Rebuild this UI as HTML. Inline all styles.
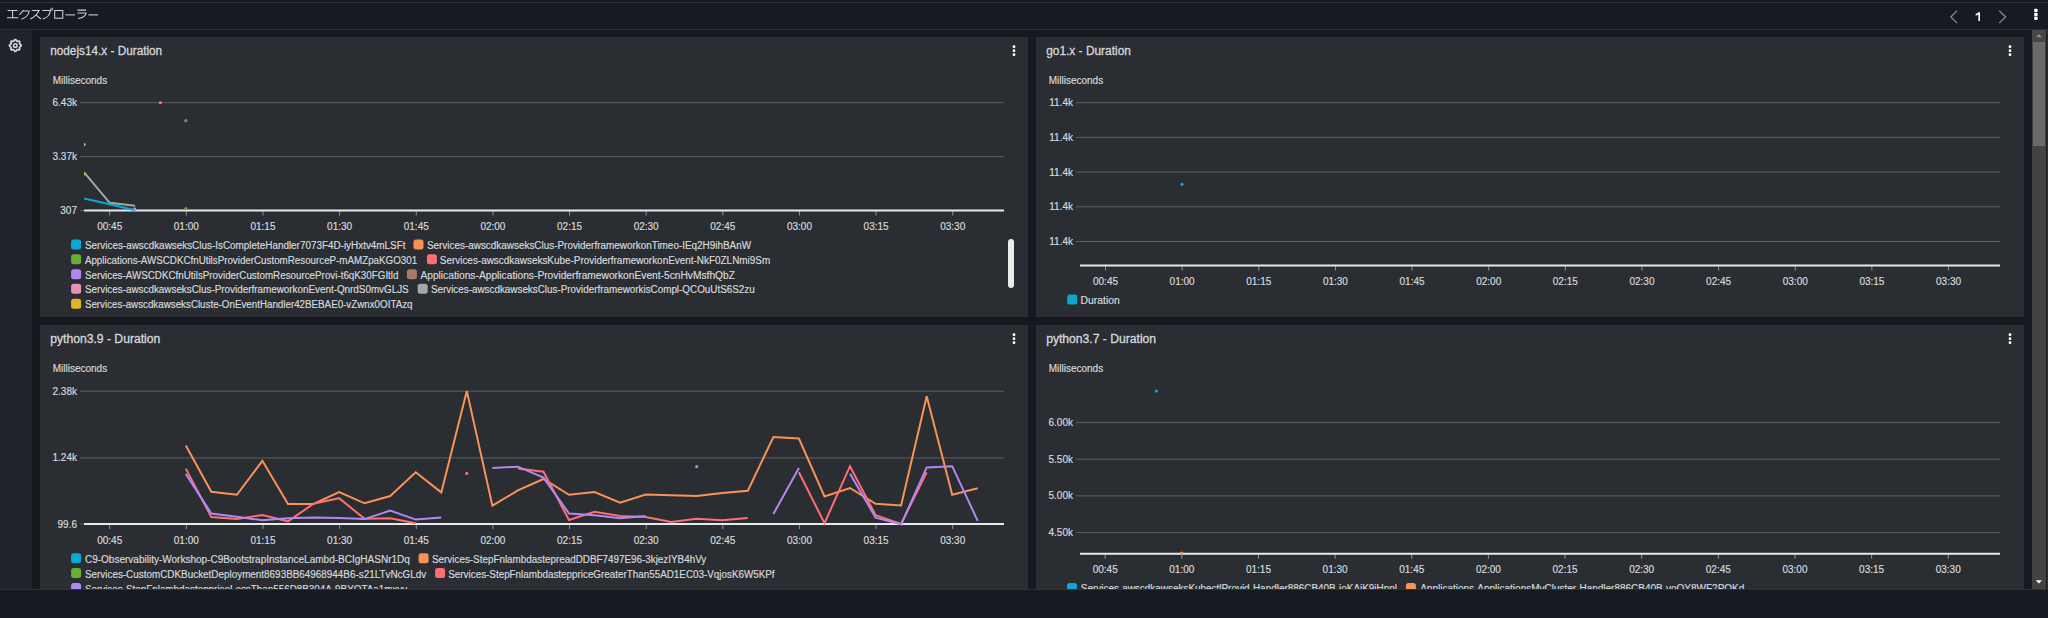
<!DOCTYPE html>
<html><head><meta charset="utf-8">
<style>
html,body{margin:0;padding:0;}
body{width:2048px;height:618px;overflow:hidden;background:#16191f;position:relative;font-family:"Liberation Sans", sans-serif;}
.abs{position:absolute;}
svg text{font-family:"Liberation Sans", sans-serif;stroke:#d5d9dd;stroke-width:0.18px;}
</style></head><body>

<div class="abs" style="left:0;top:0;width:2048px;height:2px;background:#161a21"></div>
<div class="abs" style="left:0;top:2px;width:2048px;height:1px;background:#2d3239"></div>
<div class="abs" style="left:0;top:3px;width:2048px;height:26px;background:#161a21"></div>
<div class="abs" style="left:0;top:29px;width:2048px;height:1px;background:#2d3239"></div>
<div class="abs" style="left:0;top:30px;width:32px;height:559px;background:#1f232a"></div>
<div class="abs" style="left:40px;top:37px;width:988px;height:280px;background:#2a2d32"></div>
<div class="abs" style="left:1036px;top:37px;width:988px;height:280px;background:#2a2d32"></div>
<div class="abs" style="left:40px;top:325px;width:988px;height:264px;background:#2a2d32"></div>
<div class="abs" style="left:1036px;top:325px;width:988px;height:264px;background:#2a2d32"></div>
<div class="abs" style="left:0;top:589px;width:2048px;height:1px;background:#2d3239"></div>
<div class="abs" style="left:0;top:590px;width:2048px;height:28px;background:#161a21"></div>
<div class="abs" style="left:2032px;top:30px;width:14px;height:559px;background:#434343"></div>
<div class="abs" style="left:2033px;top:42px;width:12px;height:104px;background:#6a6a6a"></div>
<div class="abs" style="left:2032px;top:30px;width:14px;height:12px;background:#474747"></div>
<div class="abs" style="left:2046px;top:30px;width:1px;height:559px;background:#1a1c22"></div>
<div class="abs" style="left:2047px;top:30px;width:1px;height:559px;background:#2b303a"></div>
<div class="abs" style="left:32px;top:30px;width:1px;height:559px;background:#131519"></div>
<svg class="abs" style="left:0;top:0" width="2048" height="618">
<defs><clipPath id="c1"><rect x="0" y="0" width="2048" height="589"/></clipPath></defs>
<g clip-path="url(#c1)">
<text x="50.2" y="55.0" font-size="12" fill="#d5d9dd" style="stroke-width:0.3px" textLength="112" lengthAdjust="spacingAndGlyphs">nodejs14.x - Duration</text>
<text x="52.7" y="84.2" font-size="10" fill="#d5d9dd">Milliseconds</text>
<line x1="80" y1="102.7" x2="1004" y2="102.7" stroke="#5c6064" stroke-width="1"/>
<text x="77" y="106.2" font-size="10" fill="#d5d9dd" text-anchor="end">6.43k</text>
<line x1="80" y1="156.7" x2="1004" y2="156.7" stroke="#5c6064" stroke-width="1"/>
<text x="77" y="160.2" font-size="10" fill="#d5d9dd" text-anchor="end">3.37k</text>
<line x1="80" y1="210.5" x2="1004" y2="210.5" stroke="#5c6064" stroke-width="1"/>
<text x="77" y="214.0" font-size="10" fill="#d5d9dd" text-anchor="end">307</text>
<line x1="109.7" y1="210.5" x2="109.7" y2="215.5" stroke="#8d9196" stroke-width="1"/>
<text x="109.7" y="230.1" font-size="10" fill="#d5d9dd" text-anchor="middle">00:45</text>
<line x1="186.34" y1="210.5" x2="186.34" y2="215.5" stroke="#8d9196" stroke-width="1"/>
<text x="186.34" y="230.1" font-size="10" fill="#d5d9dd" text-anchor="middle">01:00</text>
<line x1="262.98" y1="210.5" x2="262.98" y2="215.5" stroke="#8d9196" stroke-width="1"/>
<text x="262.98" y="230.1" font-size="10" fill="#d5d9dd" text-anchor="middle">01:15</text>
<line x1="339.62" y1="210.5" x2="339.62" y2="215.5" stroke="#8d9196" stroke-width="1"/>
<text x="339.62" y="230.1" font-size="10" fill="#d5d9dd" text-anchor="middle">01:30</text>
<line x1="416.26" y1="210.5" x2="416.26" y2="215.5" stroke="#8d9196" stroke-width="1"/>
<text x="416.26" y="230.1" font-size="10" fill="#d5d9dd" text-anchor="middle">01:45</text>
<line x1="492.9" y1="210.5" x2="492.9" y2="215.5" stroke="#8d9196" stroke-width="1"/>
<text x="492.9" y="230.1" font-size="10" fill="#d5d9dd" text-anchor="middle">02:00</text>
<line x1="569.5400000000001" y1="210.5" x2="569.5400000000001" y2="215.5" stroke="#8d9196" stroke-width="1"/>
<text x="569.5400000000001" y="230.1" font-size="10" fill="#d5d9dd" text-anchor="middle">02:15</text>
<line x1="646.1800000000001" y1="210.5" x2="646.1800000000001" y2="215.5" stroke="#8d9196" stroke-width="1"/>
<text x="646.1800000000001" y="230.1" font-size="10" fill="#d5d9dd" text-anchor="middle">02:30</text>
<line x1="722.82" y1="210.5" x2="722.82" y2="215.5" stroke="#8d9196" stroke-width="1"/>
<text x="722.82" y="230.1" font-size="10" fill="#d5d9dd" text-anchor="middle">02:45</text>
<line x1="799.46" y1="210.5" x2="799.46" y2="215.5" stroke="#8d9196" stroke-width="1"/>
<text x="799.46" y="230.1" font-size="10" fill="#d5d9dd" text-anchor="middle">03:00</text>
<line x1="876.1" y1="210.5" x2="876.1" y2="215.5" stroke="#8d9196" stroke-width="1"/>
<text x="876.1" y="230.1" font-size="10" fill="#d5d9dd" text-anchor="middle">03:15</text>
<line x1="952.74" y1="210.5" x2="952.74" y2="215.5" stroke="#8d9196" stroke-width="1"/>
<text x="952.74" y="230.1" font-size="10" fill="#d5d9dd" text-anchor="middle">03:30</text>
<line x1="84" y1="210.5" x2="1004" y2="210.5" stroke="#e6e8ea" stroke-width="2"/>
<clipPath id="cp40_37"><rect x="84" y="77" width="920" height="135.5"/></clipPath>
<g clip-path="url(#cp40_37)">
<polyline points="84.1,172.3 109.7,202.8 135.2,205.8" fill="none" stroke="#9fabaa" stroke-width="2" stroke-linejoin="miter"/>
<polyline points="84.1,198.6 109.7,204.2 135.2,210.3" fill="none" stroke="#0ba8d6" stroke-width="2" stroke-linejoin="miter"/>
<circle cx="160.4" cy="102.7" r="1.6" fill="#fe6e73"/>
<circle cx="185.8" cy="120.7" r="1.6" fill="#a97866"/>
<circle cx="84.1" cy="144.6" r="1.6" fill="#e891b4"/>
<circle cx="84.1" cy="173.9" r="1.6" fill="#dfb52c"/>
<circle cx="134.7" cy="208.9" r="1.6" fill="#b088f5"/>
<circle cx="185.8" cy="208.7" r="1.6" fill="#69ae34"/>
</g>
<rect x="71.1" y="239.4" width="10" height="10" rx="2.5" fill="#0ba8d6"/>
<text x="84.9" y="248.8" font-size="10" fill="#d5d9dd" textLength="320.6" lengthAdjust="spacingAndGlyphs">Services-awscdkawseksClus-IsCompleteHandler7073F4D-iyHxtv4mLSFt</text>
<rect x="413.5" y="239.4" width="10" height="10" rx="2.5" fill="#f89256"/>
<text x="426.9" y="248.8" font-size="10" fill="#d5d9dd" textLength="324.2" lengthAdjust="spacingAndGlyphs">Services-awscdkawseksClus-ProviderframeworkonTimeo-IEq2H9ihBAnW</text>
<rect x="71.1" y="254.2" width="10" height="10" rx="2.5" fill="#69ae34"/>
<text x="84.9" y="263.59999999999997" font-size="10" fill="#d5d9dd" textLength="332.2" lengthAdjust="spacingAndGlyphs">Applications-AWSCDKCfnUtilsProviderCustomResourceP-mAMZpaKGO301</text>
<rect x="426.9" y="254.2" width="10" height="10" rx="2.5" fill="#fe6e73"/>
<text x="439.8" y="263.59999999999997" font-size="10" fill="#d5d9dd" textLength="330.4" lengthAdjust="spacingAndGlyphs">Services-awscdkawseksKube-ProviderframeworkonEvent-NkF0ZLNmi9Sm</text>
<rect x="71.1" y="269.2" width="10" height="10" rx="2.5" fill="#b088f5"/>
<text x="84.9" y="278.59999999999997" font-size="10" fill="#d5d9dd" textLength="313.6" lengthAdjust="spacingAndGlyphs">Services-AWSCDKCfnUtilsProviderCustomResourceProvi-t6qK30FGItld</text>
<rect x="406.9" y="269.2" width="10" height="10" rx="2.5" fill="#a97866"/>
<text x="420.4" y="278.59999999999997" font-size="10" fill="#d5d9dd" textLength="314.6" lengthAdjust="spacingAndGlyphs">Applications-Applications-ProviderframeworkonEvent-5cnHvMsfhQbZ</text>
<rect x="71.1" y="283.8" width="10" height="10" rx="2.5" fill="#e891b4"/>
<text x="84.9" y="293.2" font-size="10" fill="#d5d9dd" textLength="323.8" lengthAdjust="spacingAndGlyphs">Services-awscdkawseksClus-ProviderframeworkonEvent-QnrdS0mvGLJS</text>
<rect x="417.7" y="283.8" width="10" height="10" rx="2.5" fill="#9fabaa"/>
<text x="430.9" y="293.2" font-size="10" fill="#d5d9dd" textLength="323.8" lengthAdjust="spacingAndGlyphs">Services-awscdkawseksClus-ProviderframeworkisCompl-QCOuUtS6S2zu</text>
<rect x="71.1" y="298.7" width="10" height="10" rx="2.5" fill="#dfb52c"/>
<text x="84.9" y="308.09999999999997" font-size="10" fill="#d5d9dd" textLength="327.6" lengthAdjust="spacingAndGlyphs">Services-awscdkawseksCluste-OnEventHandler42BEBAE0-vZwnx0OITAzq</text>
<rect x="1008" y="239" width="6" height="49" rx="3" fill="#ebebeb"/>
<rect x="1012.7" y="45.300000000000004" width="2.6" height="2.6" rx="0.9" fill="#ffffff"/>
<rect x="1012.7" y="49.300000000000004" width="2.6" height="2.6" rx="0.9" fill="#ffffff"/>
<rect x="1012.7" y="53.300000000000004" width="2.6" height="2.6" rx="0.9" fill="#ffffff"/>
<text x="1046.2" y="55.0" font-size="12" fill="#d5d9dd" style="stroke-width:0.3px" textLength="84.7" lengthAdjust="spacingAndGlyphs">go1.x - Duration</text>
<text x="1048.7" y="84.2" font-size="10" fill="#d5d9dd">Milliseconds</text>
<line x1="1076" y1="102.7" x2="2000" y2="102.7" stroke="#5c6064" stroke-width="1"/>
<text x="1073" y="106.2" font-size="10" fill="#d5d9dd" text-anchor="end">11.4k</text>
<line x1="1076" y1="137.4" x2="2000" y2="137.4" stroke="#5c6064" stroke-width="1"/>
<text x="1073" y="140.9" font-size="10" fill="#d5d9dd" text-anchor="end">11.4k</text>
<line x1="1076" y1="172.1" x2="2000" y2="172.1" stroke="#5c6064" stroke-width="1"/>
<text x="1073" y="175.6" font-size="10" fill="#d5d9dd" text-anchor="end">11.4k</text>
<line x1="1076" y1="206.8" x2="2000" y2="206.8" stroke="#5c6064" stroke-width="1"/>
<text x="1073" y="210.3" font-size="10" fill="#d5d9dd" text-anchor="end">11.4k</text>
<line x1="1076" y1="241.5" x2="2000" y2="241.5" stroke="#5c6064" stroke-width="1"/>
<text x="1073" y="245.0" font-size="10" fill="#d5d9dd" text-anchor="end">11.4k</text>
<line x1="1105.5" y1="265.6" x2="1105.5" y2="270.6" stroke="#8d9196" stroke-width="1"/>
<text x="1105.5" y="285.20000000000005" font-size="10" fill="#d5d9dd" text-anchor="middle">00:45</text>
<line x1="1182.14" y1="265.6" x2="1182.14" y2="270.6" stroke="#8d9196" stroke-width="1"/>
<text x="1182.14" y="285.20000000000005" font-size="10" fill="#d5d9dd" text-anchor="middle">01:00</text>
<line x1="1258.78" y1="265.6" x2="1258.78" y2="270.6" stroke="#8d9196" stroke-width="1"/>
<text x="1258.78" y="285.20000000000005" font-size="10" fill="#d5d9dd" text-anchor="middle">01:15</text>
<line x1="1335.42" y1="265.6" x2="1335.42" y2="270.6" stroke="#8d9196" stroke-width="1"/>
<text x="1335.42" y="285.20000000000005" font-size="10" fill="#d5d9dd" text-anchor="middle">01:30</text>
<line x1="1412.06" y1="265.6" x2="1412.06" y2="270.6" stroke="#8d9196" stroke-width="1"/>
<text x="1412.06" y="285.20000000000005" font-size="10" fill="#d5d9dd" text-anchor="middle">01:45</text>
<line x1="1488.7" y1="265.6" x2="1488.7" y2="270.6" stroke="#8d9196" stroke-width="1"/>
<text x="1488.7" y="285.20000000000005" font-size="10" fill="#d5d9dd" text-anchor="middle">02:00</text>
<line x1="1565.3400000000001" y1="265.6" x2="1565.3400000000001" y2="270.6" stroke="#8d9196" stroke-width="1"/>
<text x="1565.3400000000001" y="285.20000000000005" font-size="10" fill="#d5d9dd" text-anchor="middle">02:15</text>
<line x1="1641.98" y1="265.6" x2="1641.98" y2="270.6" stroke="#8d9196" stroke-width="1"/>
<text x="1641.98" y="285.20000000000005" font-size="10" fill="#d5d9dd" text-anchor="middle">02:30</text>
<line x1="1718.62" y1="265.6" x2="1718.62" y2="270.6" stroke="#8d9196" stroke-width="1"/>
<text x="1718.62" y="285.20000000000005" font-size="10" fill="#d5d9dd" text-anchor="middle">02:45</text>
<line x1="1795.26" y1="265.6" x2="1795.26" y2="270.6" stroke="#8d9196" stroke-width="1"/>
<text x="1795.26" y="285.20000000000005" font-size="10" fill="#d5d9dd" text-anchor="middle">03:00</text>
<line x1="1871.9" y1="265.6" x2="1871.9" y2="270.6" stroke="#8d9196" stroke-width="1"/>
<text x="1871.9" y="285.20000000000005" font-size="10" fill="#d5d9dd" text-anchor="middle">03:15</text>
<line x1="1948.54" y1="265.6" x2="1948.54" y2="270.6" stroke="#8d9196" stroke-width="1"/>
<text x="1948.54" y="285.20000000000005" font-size="10" fill="#d5d9dd" text-anchor="middle">03:30</text>
<line x1="1080" y1="265.6" x2="2000" y2="265.6" stroke="#e6e8ea" stroke-width="2"/>
<clipPath id="cp1036_37"><rect x="1080" y="77" width="920" height="190.60000000000002"/></clipPath>
<g clip-path="url(#cp1036_37)">
<circle cx="1182" cy="184.3" r="1.6" fill="#0ba8d6"/>
</g>
<rect x="1067.2" y="294.6" width="10" height="10" rx="2.5" fill="#0ba8d6"/>
<text x="1080.6" y="304.0" font-size="10" fill="#d5d9dd" textLength="39.2" lengthAdjust="spacingAndGlyphs">Duration</text>
<rect x="2008.7" y="45.300000000000004" width="2.6" height="2.6" rx="0.9" fill="#ffffff"/>
<rect x="2008.7" y="49.300000000000004" width="2.6" height="2.6" rx="0.9" fill="#ffffff"/>
<rect x="2008.7" y="53.300000000000004" width="2.6" height="2.6" rx="0.9" fill="#ffffff"/>
<text x="50.2" y="343.0" font-size="12" fill="#d5d9dd" style="stroke-width:0.3px" textLength="110.1" lengthAdjust="spacingAndGlyphs">python3.9 - Duration</text>
<text x="52.7" y="372.2" font-size="10" fill="#d5d9dd">Milliseconds</text>
<line x1="80" y1="391.2" x2="1004" y2="391.2" stroke="#5c6064" stroke-width="1"/>
<text x="77" y="394.7" font-size="10" fill="#d5d9dd" text-anchor="end">2.38k</text>
<line x1="80" y1="457.9" x2="1004" y2="457.9" stroke="#5c6064" stroke-width="1"/>
<text x="77" y="461.4" font-size="10" fill="#d5d9dd" text-anchor="end">1.24k</text>
<line x1="80" y1="524" x2="1004" y2="524" stroke="#5c6064" stroke-width="1"/>
<text x="77" y="527.5" font-size="10" fill="#d5d9dd" text-anchor="end">99.6</text>
<line x1="109.7" y1="524" x2="109.7" y2="529" stroke="#8d9196" stroke-width="1"/>
<text x="109.7" y="543.6" font-size="10" fill="#d5d9dd" text-anchor="middle">00:45</text>
<line x1="186.34" y1="524" x2="186.34" y2="529" stroke="#8d9196" stroke-width="1"/>
<text x="186.34" y="543.6" font-size="10" fill="#d5d9dd" text-anchor="middle">01:00</text>
<line x1="262.98" y1="524" x2="262.98" y2="529" stroke="#8d9196" stroke-width="1"/>
<text x="262.98" y="543.6" font-size="10" fill="#d5d9dd" text-anchor="middle">01:15</text>
<line x1="339.62" y1="524" x2="339.62" y2="529" stroke="#8d9196" stroke-width="1"/>
<text x="339.62" y="543.6" font-size="10" fill="#d5d9dd" text-anchor="middle">01:30</text>
<line x1="416.26" y1="524" x2="416.26" y2="529" stroke="#8d9196" stroke-width="1"/>
<text x="416.26" y="543.6" font-size="10" fill="#d5d9dd" text-anchor="middle">01:45</text>
<line x1="492.9" y1="524" x2="492.9" y2="529" stroke="#8d9196" stroke-width="1"/>
<text x="492.9" y="543.6" font-size="10" fill="#d5d9dd" text-anchor="middle">02:00</text>
<line x1="569.5400000000001" y1="524" x2="569.5400000000001" y2="529" stroke="#8d9196" stroke-width="1"/>
<text x="569.5400000000001" y="543.6" font-size="10" fill="#d5d9dd" text-anchor="middle">02:15</text>
<line x1="646.1800000000001" y1="524" x2="646.1800000000001" y2="529" stroke="#8d9196" stroke-width="1"/>
<text x="646.1800000000001" y="543.6" font-size="10" fill="#d5d9dd" text-anchor="middle">02:30</text>
<line x1="722.82" y1="524" x2="722.82" y2="529" stroke="#8d9196" stroke-width="1"/>
<text x="722.82" y="543.6" font-size="10" fill="#d5d9dd" text-anchor="middle">02:45</text>
<line x1="799.46" y1="524" x2="799.46" y2="529" stroke="#8d9196" stroke-width="1"/>
<text x="799.46" y="543.6" font-size="10" fill="#d5d9dd" text-anchor="middle">03:00</text>
<line x1="876.1" y1="524" x2="876.1" y2="529" stroke="#8d9196" stroke-width="1"/>
<text x="876.1" y="543.6" font-size="10" fill="#d5d9dd" text-anchor="middle">03:15</text>
<line x1="952.74" y1="524" x2="952.74" y2="529" stroke="#8d9196" stroke-width="1"/>
<text x="952.74" y="543.6" font-size="10" fill="#d5d9dd" text-anchor="middle">03:30</text>
<line x1="84" y1="524" x2="1004" y2="524" stroke="#e6e8ea" stroke-width="2"/>
<clipPath id="cp40_325"><rect x="84" y="365" width="920" height="161"/></clipPath>
<g clip-path="url(#cp40_325)">
<polyline points="185.8,445.5 211.3,491.7 236.9,494.8 262.4,460.8 288.0,504.0 313.5,504.0 339.1,492.1 364.6,503.3 390.2,496.0 415.7,472.2 441.3,492.4 466.8,390.9 492.4,505.7 517.9,490.4 543.5,479.0 569.0,494.8 594.5,492.1 620.1,502.6 645.6,494.6 671.2,495.3 696.7,496.0 722.3,493.1 747.8,490.7 773.4,437.0 798.9,438.5 824.5,496.5 850.0,488.0 875.6,503.8 901.1,505.5 926.7,396.3 952.2,494.8 977.7,488.3" fill="none" stroke="#f89256" stroke-width="2" stroke-linejoin="miter"/>
<polyline points="185.8,468.6 211.3,517.1 236.9,519.1 262.4,515.0 288.0,521.3 313.5,503.8 339.1,498.2 364.6,518.8 390.2,518.3 415.7,523.2" fill="none" stroke="#fe6e73" stroke-width="2" stroke-linejoin="miter"/>
<polyline points="517.9,468.6 543.5,471.7 569.0,520.0 594.5,511.8 620.1,515.9 645.6,517.1 671.2,522.0 696.7,518.8 722.3,520.3 747.8,517.9" fill="none" stroke="#fe6e73" stroke-width="2" stroke-linejoin="miter"/>
<polyline points="798.9,472.2 824.5,523.2 850.0,466.2 875.6,515.2 901.1,523.9 926.7,472.2" fill="none" stroke="#fe6e73" stroke-width="2" stroke-linejoin="miter"/>
<polyline points="185.8,473.9 211.3,513.5 236.9,516.7 262.4,520.3 288.0,518.3 313.5,517.4 339.1,518.1 364.6,519.1 390.2,510.6 415.7,519.6 441.3,517.4" fill="none" stroke="#b088f5" stroke-width="2" stroke-linejoin="miter"/>
<polyline points="492.4,467.9 517.9,466.7 543.5,477.6 569.0,513.5 594.5,515.2 620.1,518.3 645.6,515.9" fill="none" stroke="#b088f5" stroke-width="2" stroke-linejoin="miter"/>
<polyline points="773.4,514.0 798.9,467.9" fill="none" stroke="#b088f5" stroke-width="2" stroke-linejoin="miter"/>
<polyline points="850.0,473.7 875.6,517.6 901.1,524.4 926.7,467.4 952.2,466.2 977.7,520.8" fill="none" stroke="#b088f5" stroke-width="2" stroke-linejoin="miter"/>
<circle cx="466.81333333333333" cy="473.4" r="1.6" fill="#fe6e73"/>
<circle cx="696.7333333333333" cy="466.7" r="1.6" fill="#b088f5"/>
</g>
<rect x="71.1" y="553.2" width="10" height="10" rx="2.5" fill="#0ba8d6"/>
<text x="84.9" y="562.6" font-size="10" fill="#d5d9dd" textLength="325" lengthAdjust="spacingAndGlyphs">C9-Observability-Workshop-C9BootstrapInstanceLambd-BCIgHASNr1Dq</text>
<rect x="418.6" y="553.2" width="10" height="10" rx="2.5" fill="#f89256"/>
<text x="432" y="562.6" font-size="10" fill="#d5d9dd" textLength="274.3" lengthAdjust="spacingAndGlyphs">Services-StepFnlambdastepreadDDBF7497E96-3kjezIYB4hVy</text>
<rect x="71.1" y="568.1" width="10" height="10" rx="2.5" fill="#69ae34"/>
<text x="84.9" y="577.5" font-size="10" fill="#d5d9dd" textLength="341.3" lengthAdjust="spacingAndGlyphs">Services-CustomCDKBucketDeployment8693BB64968944B6-s21LTvNcGLdv</text>
<rect x="435.1" y="568.1" width="10" height="10" rx="2.5" fill="#fe6e73"/>
<text x="448.3" y="577.5" font-size="10" fill="#d5d9dd" textLength="326.3" lengthAdjust="spacingAndGlyphs">Services-StepFnlambdasteppriceGreaterThan55AD1EC03-VqjosK6W5KPf</text>
<rect x="71.1" y="583.1" width="10" height="10" rx="2.5" fill="#b088f5"/>
<text x="84.9" y="592.5" font-size="10" fill="#d5d9dd" textLength="322.3" lengthAdjust="spacingAndGlyphs">Services-StepFnlambdasteppriceLessThan556D8B304A-9BYOTAa1mxyy</text>
<rect x="1012.7" y="333.3" width="2.6" height="2.6" rx="0.9" fill="#ffffff"/>
<rect x="1012.7" y="337.3" width="2.6" height="2.6" rx="0.9" fill="#ffffff"/>
<rect x="1012.7" y="341.3" width="2.6" height="2.6" rx="0.9" fill="#ffffff"/>
<text x="1046.2" y="343.0" font-size="12" fill="#d5d9dd" style="stroke-width:0.3px" textLength="109.9" lengthAdjust="spacingAndGlyphs">python3.7 - Duration</text>
<text x="1048.7" y="372.2" font-size="10" fill="#d5d9dd">Milliseconds</text>
<line x1="1076" y1="422.6" x2="2000" y2="422.6" stroke="#5c6064" stroke-width="1"/>
<text x="1073" y="426.1" font-size="10" fill="#d5d9dd" text-anchor="end">6.00k</text>
<line x1="1076" y1="459.2" x2="2000" y2="459.2" stroke="#5c6064" stroke-width="1"/>
<text x="1073" y="462.7" font-size="10" fill="#d5d9dd" text-anchor="end">5.50k</text>
<line x1="1076" y1="495.9" x2="2000" y2="495.9" stroke="#5c6064" stroke-width="1"/>
<text x="1073" y="499.4" font-size="10" fill="#d5d9dd" text-anchor="end">5.00k</text>
<line x1="1076" y1="532.6" x2="2000" y2="532.6" stroke="#5c6064" stroke-width="1"/>
<text x="1073" y="536.1" font-size="10" fill="#d5d9dd" text-anchor="end">4.50k</text>
<line x1="1105.2" y1="553.8" x2="1105.2" y2="558.8" stroke="#8d9196" stroke-width="1"/>
<text x="1105.2" y="573.4" font-size="10" fill="#d5d9dd" text-anchor="middle">00:45</text>
<line x1="1181.8400000000001" y1="553.8" x2="1181.8400000000001" y2="558.8" stroke="#8d9196" stroke-width="1"/>
<text x="1181.8400000000001" y="573.4" font-size="10" fill="#d5d9dd" text-anchor="middle">01:00</text>
<line x1="1258.48" y1="553.8" x2="1258.48" y2="558.8" stroke="#8d9196" stroke-width="1"/>
<text x="1258.48" y="573.4" font-size="10" fill="#d5d9dd" text-anchor="middle">01:15</text>
<line x1="1335.1200000000001" y1="553.8" x2="1335.1200000000001" y2="558.8" stroke="#8d9196" stroke-width="1"/>
<text x="1335.1200000000001" y="573.4" font-size="10" fill="#d5d9dd" text-anchor="middle">01:30</text>
<line x1="1411.76" y1="553.8" x2="1411.76" y2="558.8" stroke="#8d9196" stroke-width="1"/>
<text x="1411.76" y="573.4" font-size="10" fill="#d5d9dd" text-anchor="middle">01:45</text>
<line x1="1488.4" y1="553.8" x2="1488.4" y2="558.8" stroke="#8d9196" stroke-width="1"/>
<text x="1488.4" y="573.4" font-size="10" fill="#d5d9dd" text-anchor="middle">02:00</text>
<line x1="1565.04" y1="553.8" x2="1565.04" y2="558.8" stroke="#8d9196" stroke-width="1"/>
<text x="1565.04" y="573.4" font-size="10" fill="#d5d9dd" text-anchor="middle">02:15</text>
<line x1="1641.68" y1="553.8" x2="1641.68" y2="558.8" stroke="#8d9196" stroke-width="1"/>
<text x="1641.68" y="573.4" font-size="10" fill="#d5d9dd" text-anchor="middle">02:30</text>
<line x1="1718.3200000000002" y1="553.8" x2="1718.3200000000002" y2="558.8" stroke="#8d9196" stroke-width="1"/>
<text x="1718.3200000000002" y="573.4" font-size="10" fill="#d5d9dd" text-anchor="middle">02:45</text>
<line x1="1794.96" y1="553.8" x2="1794.96" y2="558.8" stroke="#8d9196" stroke-width="1"/>
<text x="1794.96" y="573.4" font-size="10" fill="#d5d9dd" text-anchor="middle">03:00</text>
<line x1="1871.6" y1="553.8" x2="1871.6" y2="558.8" stroke="#8d9196" stroke-width="1"/>
<text x="1871.6" y="573.4" font-size="10" fill="#d5d9dd" text-anchor="middle">03:15</text>
<line x1="1948.24" y1="553.8" x2="1948.24" y2="558.8" stroke="#8d9196" stroke-width="1"/>
<text x="1948.24" y="573.4" font-size="10" fill="#d5d9dd" text-anchor="middle">03:30</text>
<line x1="1080" y1="553.8" x2="2000" y2="553.8" stroke="#e6e8ea" stroke-width="2"/>
<clipPath id="cp1036_325"><rect x="1080" y="365" width="920" height="190.79999999999995"/></clipPath>
<g clip-path="url(#cp1036_325)">
<circle cx="1156.4" cy="391.1" r="1.6" fill="#0ba8d6"/>
<circle cx="1181.7" cy="553" r="1.6" fill="#f89256"/>
</g>
<rect x="1067" y="583" width="10" height="10" rx="2.5" fill="#0ba8d6"/>
<text x="1080.8" y="592.4" font-size="10" fill="#d5d9dd" textLength="316.2" lengthAdjust="spacingAndGlyphs">Services-awscdkawseksKubectlProvid-Handler886CB40B-ioKAiK9iHnpl</text>
<rect x="1405.9" y="583" width="10" height="10" rx="2.5" fill="#f89256"/>
<text x="1420.2" y="592.4" font-size="10" fill="#d5d9dd" textLength="324.1" lengthAdjust="spacingAndGlyphs">Applications-ApplicationsMyCluster-Handler886CB40B-voOY8WF2POKd</text>
<rect x="2008.7" y="333.3" width="2.6" height="2.6" rx="0.9" fill="#ffffff"/>
<rect x="2008.7" y="337.3" width="2.6" height="2.6" rx="0.9" fill="#ffffff"/>
<rect x="2008.7" y="341.3" width="2.6" height="2.6" rx="0.9" fill="#ffffff"/>
</g>
<g fill="none" stroke="#cfd3d7" stroke-width="1.05" stroke-linecap="butt">
<path d="M7.6 10.5H17.5M12.6 10.5V17.8M7 17.8H18.3"/>
<path d="M23.6 10.1L19.3 14.9M23.0 11H29.2Q28.2 17 21.3 19.3"/>
<path d="M31.8 10.5H39.1Q36.5 16 30.3 19M36.0 14.9L40.8 19"/>
<path d="M42.3 10.5H50.4Q49.5 17.5 42.6 19"/>
<circle cx="51.7" cy="9.3" r="1.1" stroke-width="0.9"/>
<rect x="54.7" y="10.5" width="8.1" height="7.7"/>
<path d="M65.4 14.9H75"/>
<path d="M77.4 10.1H86.1M77.4 12.9H86.1Q85.5 17.6 78.2 18.6"/>
<path d="M88.4 14.9H98"/>
</g>
<path d="M1957 10.8L1950.8 16.9L1957 23" fill="none" stroke="#7b828a" stroke-width="1.35"/>
<path d="M1999.2 10.8L2005.6 16.9L1999.2 23" fill="none" stroke="#7b828a" stroke-width="1.35"/>
<path d="M1978.4 12.3H1980V21H1978.4V14.5Q1977.4 15.3 1975.6 15.6V14.2Q1977.5 13.5 1978.4 12.3Z" fill="#ffffff"/>
<rect x="2034.2" y="8.700000000000001" width="3.4" height="3.4" rx="0.9" fill="#ffffff"/>
<rect x="2034.2" y="12.700000000000001" width="3.4" height="3.4" rx="0.9" fill="#ffffff"/>
<rect x="2034.2" y="16.6" width="3.4" height="3.4" rx="0.9" fill="#ffffff"/>
<polyline points="15.30,39.70 15.53,39.70 15.76,39.72 15.96,39.90 16.15,40.14 16.31,40.40 16.46,40.67 16.59,40.92 16.72,41.13 16.89,41.18 17.06,41.25 17.23,41.32 17.39,41.40 17.63,41.35 17.90,41.26 18.19,41.18 18.49,41.11 18.79,41.07 19.07,41.09 19.24,41.24 19.40,41.40 19.56,41.56 19.71,41.73 19.73,42.01 19.69,42.31 19.62,42.61 19.54,42.90 19.45,43.17 19.40,43.41 19.48,43.57 19.55,43.74 19.62,43.91 19.67,44.08 19.88,44.21 20.13,44.34 20.40,44.49 20.66,44.65 20.90,44.84 21.08,45.04 21.10,45.27 21.10,45.50 21.10,45.73 21.08,45.96 20.90,46.16 20.66,46.35 20.40,46.51 20.13,46.66 19.88,46.79 19.67,46.92 19.62,47.09 19.55,47.26 19.48,47.43 19.40,47.59 19.45,47.83 19.54,48.10 19.62,48.39 19.69,48.69 19.73,48.99 19.71,49.27 19.56,49.44 19.40,49.60 19.24,49.76 19.07,49.91 18.79,49.93 18.49,49.89 18.19,49.82 17.90,49.74 17.63,49.65 17.39,49.60 17.23,49.68 17.06,49.75 16.89,49.82 16.72,49.87 16.59,50.08 16.46,50.33 16.31,50.60 16.15,50.86 15.96,51.10 15.76,51.28 15.53,51.30 15.30,51.30 15.07,51.30 14.84,51.28 14.64,51.10 14.45,50.86 14.29,50.60 14.14,50.33 14.01,50.08 13.88,49.87 13.71,49.82 13.54,49.75 13.37,49.68 13.21,49.60 12.97,49.65 12.70,49.74 12.41,49.82 12.11,49.89 11.81,49.93 11.53,49.91 11.36,49.76 11.20,49.60 11.04,49.44 10.89,49.27 10.87,48.99 10.91,48.69 10.98,48.39 11.06,48.10 11.15,47.83 11.20,47.59 11.12,47.43 11.05,47.26 10.98,47.09 10.93,46.92 10.72,46.79 10.47,46.66 10.20,46.51 9.94,46.35 9.70,46.16 9.52,45.96 9.50,45.73 9.50,45.50 9.50,45.27 9.52,45.04 9.70,44.84 9.94,44.65 10.20,44.49 10.47,44.34 10.72,44.21 10.93,44.08 10.98,43.91 11.05,43.74 11.12,43.57 11.20,43.41 11.15,43.17 11.06,42.90 10.98,42.61 10.91,42.31 10.87,42.01 10.89,41.73 11.04,41.56 11.20,41.40 11.36,41.24 11.53,41.09 11.81,41.07 12.11,41.11 12.41,41.18 12.70,41.26 12.97,41.35 13.21,41.40 13.37,41.32 13.54,41.25 13.71,41.18 13.88,41.13 14.01,40.92 14.14,40.67 14.29,40.40 14.45,40.14 14.64,39.90 14.84,39.72 15.07,39.70 15.30,39.70" fill="none" stroke="#d5d9dd" stroke-width="1.75" stroke-linejoin="round"/>
<circle cx="15.3" cy="45.5" r="1.8" fill="none" stroke="#d5d9dd" stroke-width="1.5"/>
<path d="M2036 37.3L2038.9 34L2041.9 37.3Z" fill="#8f8f8f"/>
<path d="M2035.8 580.2L2042 580.2L2038.9 583.4Z" fill="#ffffff"/>
</svg>
</body></html>
